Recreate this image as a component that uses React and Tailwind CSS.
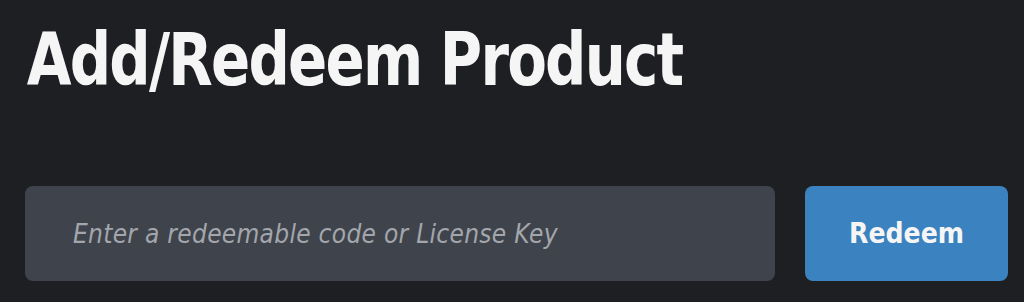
import React from 'react';

export default function App() {
  return (
    <div className="w-[1024px] h-[302px] bg-[#1e1f23] overflow-hidden" style={{ fontFamily: '"DejaVu Sans Condensed", "DejaVu Sans", sans-serif' }}>
      <div className="pl-[25px] pr-[16px]">
        <h1 className="pt-[18px] pl-[2px] text-[73px] leading-[84px] font-bold text-[#f5f5f5] tracking-[-2px] whitespace-nowrap [font-stretch:condensed] origin-left scale-x-[0.88]">
          Add/Redeem Product
        </h1>

        <div className="mt-[84px] flex gap-[30px]">
          <input
            type="text"
            placeholder="Enter a redeemable code or License Key"
            className="w-[750px] h-[95px] rounded-[8px] bg-[#3f434b] pl-[48px] pr-[46px] text-[26px] tracking-[0.3px] italic font-light text-white placeholder:text-[#a3a6ac] outline-none [font-stretch:condensed]"
          />
          <button className="w-[203px] h-[95px] rounded-[8px] bg-[#3b82c0] text-[28px] font-bold text-[#f5f5f5] [font-stretch:condensed]">
            Redeem
          </button>
        </div>
      </div>
    </div>
  );
}
